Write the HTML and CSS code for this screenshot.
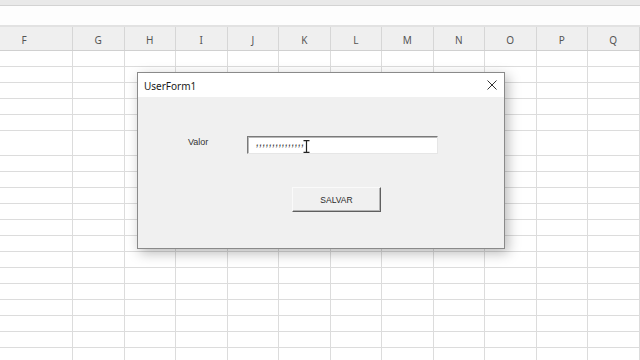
FILE: index.html
```html
<!DOCTYPE html>
<html lang="pt">
<head>
  <meta charset="UTF-8" />
  <title>UserForm1</title>
  <link rel="stylesheet" href="styles.css">
</head>
<body>
  <div class="ribbon-edge"></div>
  <div class="formula-bar"></div>
  <div class="band"></div>

  <div class="sheet">
    <div class="col-head" id="colHead"></div>
    <div class="grid" id="grid"></div>
  </div>

  <div class="dialog">
    <div class="title-bar">
      <span class="title">UserForm1</span>
      <svg class="close" width="10" height="10" viewBox="0 0 10 10">
        <path d="M0.5 0.5 L9.5 9.5 M9.5 0.5 L0.5 9.5" stroke="#333" stroke-width="1" fill="none"/>
      </svg>
    </div>
    <div class="form-body">
      <div class="field-row">
        <label class="label" for="valor">Valor</label>
        <div class="textbox">
          <span class="typed">,,,,,,,,,,,,,,,</span>
          <svg class="ibeam" width="7" height="13" viewBox="0 0 7 13">
            <path d="M0.5 0.7 H6.5 M3.5 0.7 V12.3 M0.5 12.3 H6.5" stroke="#222" stroke-width="1.2" fill="none"/>
          </svg>
        </div>
      </div>
      <button type="button" class="btn-salvar">SALVAR</button>
    </div>
  </div>

  <script>
    const colunas = ["F", "G", "H", "I", "J", "K", "L", "M", "N", "O", "P", "Q"];
    const head = document.getElementById("colHead");
    const grid = document.getElementById("grid");

    colunas.forEach(letra => {
      const cell = document.createElement("div");
      cell.className = "head-cell";
      cell.textContent = letra;
      head.appendChild(cell);
    });

    // linha 6 é mais alta que as outras
    for (let r = 0; r < 19; r++) {
      const row = document.createElement("div");
      row.className = r === 5 ? "row row-tall" : "row";
      colunas.forEach(() => {
        const cell = document.createElement("div");
        cell.className = "cell";
        row.appendChild(cell);
      });
      grid.appendChild(row);
    }
  </script>
</body>
</html>
```

FILE: styles.css
```css
:root {
  --grid-line: #dcdcdc;
  --head-bg: #efefef;
  --form-bg: #f0f0f0;
  --text: #333;
}

body {
  margin: 0;
  background: white;
  font-family: "Noto Sans", "Liberation Sans", sans-serif;
  overflow: hidden;
  width: 640px;
  height: 360px;
  position: relative;
}

.ribbon-edge {
  height: 5px;
  background: #e9e9e9;
  border-bottom: 1px solid #d3d3d3;
}

.formula-bar {
  height: 19px;
  background: #fdfdfd;
}

.band {
  height: 2px;
  background: #e2e2e2;
}

.col-head {
  display: flex;
  height: 24px;
  background: var(--head-bg);
  border-bottom: 1px solid #d0d0d0;
  box-sizing: border-box;
}

.head-cell,
.cell {
  flex: 0 0 51.5px;
  box-sizing: border-box;
  border-right: 1px solid var(--grid-line);
}

.head-cell {
  border-right-color: #d6d6d6;
  font-size: 10px;
  color: #555;
  text-align: center;
  line-height: 24px;
  padding-top: 1px;
}

.head-cell:first-child,
.cell:first-child {
  flex-basis: 73px;
}

.head-cell:first-child {
  padding-right: 24px;
}

.row {
  display: flex;
  height: 16px;
  box-sizing: border-box;
  border-bottom: 1px solid var(--grid-line);
}

.row-tall {
  height: 25px;
}

/* janela do formulario */
.dialog {
  position: absolute;
  left: 137px;
  top: 72px;
  width: 368px;
  height: 177px;
  box-sizing: border-box;
  border: 1px solid #8a8a8a;
  background: var(--form-bg);
  box-shadow: 3px 4px 12px rgba(0, 0, 0, 0.28);
  display: flex;
  flex-direction: column;
}

.title-bar {
  height: 24px;
  background: white;
  display: flex;
  align-items: center;
  justify-content: space-between;
  padding: 0 7px 0 6px;
  flex-shrink: 0;
}

.title {
  font-size: 10px;
  color: #1a1a1a;
  padding-top: 1px;
}

.form-body {
  padding-top: 39px;
  font-family: "Liberation Sans", sans-serif;
}

.field-row {
  display: flex;
  align-items: center;
}

.label {
  width: 59px;
  margin-left: 50px;
  font-size: 9px;
  color: var(--text);
  padding-bottom: 6px;
}

.textbox {
  position: relative;
  width: 191px;
  height: 18px;
  box-sizing: border-box;
  background: white;
  border: 1px solid;
  border-color: #7a7a7a #e6e6e6 #e6e6e6 #7a7a7a;
  box-shadow: inset 1px 1px 0 #b8b8b8;
  padding-left: 8px;
}

.typed {
  display: block;
  font-size: 12px;
  line-height: 10px;
  color: #444;
  letter-spacing: -0.1px;
  font-style: italic;
}

.ibeam {
  position: absolute;
  left: 55px;
  top: 3px;
}

.btn-salvar {
  display: block;
  margin: 33px 0 0 154px;
  width: 89px;
  height: 25px;
  box-sizing: border-box;
  background: var(--form-bg);
  border: 1px solid;
  border-color: #fafafa #5f5f5f #5f5f5f #fafafa;
  box-shadow: inset -1px -1px 0 #b4b4b4;
  font-family: "Liberation Sans", sans-serif;
  font-size: 8.5px;
  color: #2a2a2a;
  padding: 0;
  padding-top: 1px;
}
```
